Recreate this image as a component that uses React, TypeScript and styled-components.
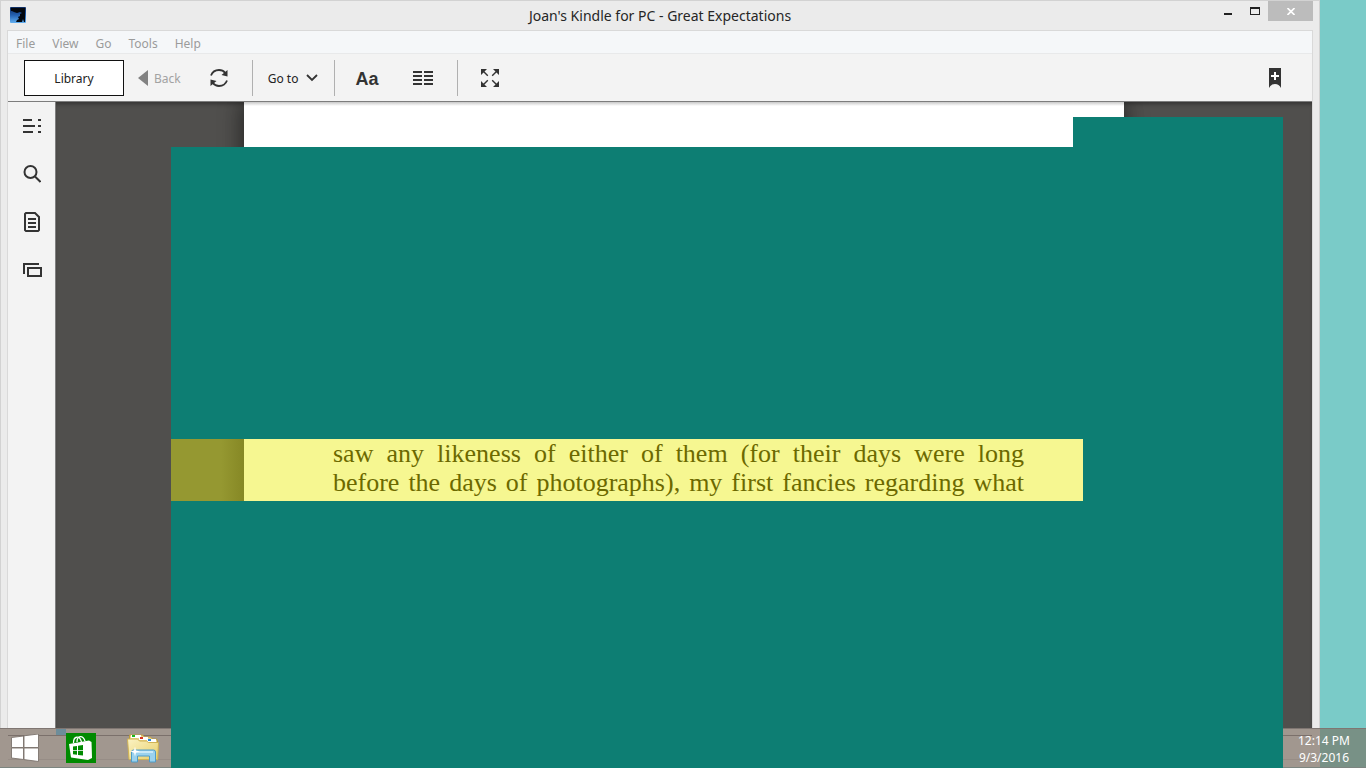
import React from 'react';
import styled, { createGlobalStyle } from 'styled-components';

const Global = createGlobalStyle`
  *, *::before, *::after { box-sizing: border-box; }
  html, body { margin: 0; }
  body { font-family: "Noto Sans", "Open Sans", sans-serif; font-size: 12px; overflow: hidden; }
  button { font: inherit; color: inherit; background: none; border: 0; padding: 0; margin: 0; }
  svg { display: block; }
`;

const Desktop = styled.div`
  position: relative;
  display: flex;
  height: 100vh;
  background: #7acbc8;
  overflow: hidden;
`;

const AppWindow = styled.section`
  display: flex;
  flex-direction: column;
  flex: 1;
  margin-right: 46px;
  padding: 0 6px 8px;
  background: #ebebeb;
  border: 1px solid #d2d2d2;
`;

const TitleBar = styled.header`
  position: relative;
  display: flex;
  justify-content: space-between;
  height: 29px;
  padding-left: 3px;
`;

const AppIcon = styled.svg`
  margin-top: 6px;
`;

const Title = styled.h1`
  position: absolute;
  inset: 0;
  margin: 0;
  text-align: center;
  font-size: 14px;
  font-weight: 400;
  line-height: 29px;
  color: #262626;
`;

const WindowControls = styled.div`
  position: relative;
  display: flex;
  height: 20px;
`;

const WindowButton = styled.button<{ $close?: boolean }>`
  display: grid;
  place-items: center;
  width: ${(p) => (p.$close ? 45 : 27)}px;
  background: ${(p) => (p.$close ? '#bcbcbc' : 'transparent')};
`;

const Frame = styled.div`
  display: flex;
  flex-direction: column;
  flex: 1;
  border: 1px solid #d9d9d9;
  border-bottom: 0;
`;

const MenuBar = styled.nav`
  display: flex;
  gap: 17px;
  height: 23px;
  padding-left: 8px;
  background: #f5f7f9;
  border-bottom: 1px solid #e8e9ea;
`;

const MenuItem = styled.button`
  color: #9b9b9b;
  padding-top: 2px;
  line-height: 22px;
`;

const Toolbar = styled.div`
  display: flex;
  align-items: center;
  height: 48px;
  padding: 0 31px 0 16px;
  background: #f3f3f3;
  border-bottom: 1px solid #7d7d7d;
`;

const LibraryButton = styled.button`
  width: 100px;
  height: 36px;
  padding-top: 2px;
  background: #fff;
  border: 1px solid #111;
  color: #222;
`;

const BackButton = styled.button`
  display: flex;
  align-items: center;
  gap: 6px;
  margin: 0 28px 0 14px;
  color: #a2a2a2;
`;

const Label = styled.span`
  padding-top: 2px;
`;

const ToolButton = styled.button<{ $gap?: number }>`
  display: flex;
  align-items: center;
  gap: 8px;
  margin-right: ${(p) => p.$gap ?? 0}px;
  color: #222;
`;

const TypeButton = styled(ToolButton)`
  padding-top: 2px;
  font-family: "Liberation Sans", sans-serif;
  font-size: 18px;
  font-weight: 700;
  line-height: 20px;
  color: #333;
`;

const Divider = styled.span<{ $gap: number }>`
  width: 1px;
  height: 36px;
  margin-right: ${(p) => p.$gap}px;
  background: #b0b0b0;
`;

const Spacer = styled.span`
  flex: 1;
`;

const Body = styled.div`
  display: flex;
  flex: 1;
`;

const SideBar = styled.aside`
  display: flex;
  flex-direction: column;
  align-items: center;
  gap: 24px;
  width: 48px;
  padding-top: 12px;
  background: #f3f3f3;
  border-right: 1px solid #7f7f7f;
`;

const SideButton = styled.button`
  display: grid;
  place-items: center;
  width: 24px;
  height: 24px;
`;

const Reader = styled.main`
  display: flex;
  flex: 1;
  padding: 0 188px;
  background: #504f4d;
  box-shadow: inset 0 4px 4px -2px rgba(0, 0, 0, 0.35);
  border-bottom: 1px solid #3c3a39;
  margin-bottom: 24px;
`;

const Page = styled.div`
  flex: 1;
  background: linear-gradient(#c8c8c8, #fff 4px);
  box-shadow: -4px 0 20px rgba(0, 0, 0, 0.35), 4px 0 20px rgba(0, 0, 0, 0.3);
  clip-path: inset(0 -30px 0 -30px);
`;

const MaskTab = styled.div`
  position: absolute;
  top: 117px;
  right: 83px;
  width: 210px;
  height: 30px;
  background: #0d7e73;
`;

const Mask = styled.div`
  position: absolute;
  inset: 147px 83px 0 171px;
  padding: 292px 200px 0 0;
  background: #0d7e73;
`;

const ReadingStrip = styled.div`
  height: 62px;
  padding: 0 59px 0 162px;
  background: linear-gradient(90deg, #959831 50px, #868825 73px, #f6f791 73px);
`;

const Passage = styled.p`
  margin: 0;
  font-family: "Liberation Serif", serif;
  font-size: 26px;
  line-height: 29px;
  color: #6c6900;
`;

const Line = styled.span`
  display: block;
  text-align: justify;
  text-align-last: justify;
  white-space: nowrap;
`;

const TaskBar = styled.footer<{ $end?: boolean }>`
  position: absolute;
  bottom: 0;
  ${(p) => (p.$end ? 'right: 0; width: 83px;' : 'left: 0; width: 171px;')}
  display: flex;
  align-items: center;
  height: 40px;
  background: ${(p) =>
    p.$end ? 'linear-gradient(90deg, #a1978f 37px, #789186 37px)' : '#a1978f'};
  border-top: 1px solid #7f7672;
  border-bottom: 1px solid #7c8580;
`;

const SeamLine = styled.span<{ $from: number; $to: number }>`
  position: absolute;
  top: 6px;
  left: ${(p) => p.$from}px;
  right: ${(p) => p.$to}px;
  height: 25px;
  border-top: 1px solid #7b706b;
  border-bottom: 1px solid #978d86;
`;

const ProgressGlint = styled.span`
  position: absolute;
  top: 0;
  left: 56px;
  width: 10px;
  height: 6px;
  background: #6d8d9a;
`;

const TaskButton = styled.button<{ $gap: number }>`
  position: relative;
  margin-left: ${(p) => p.$gap}px;
`;

const Clock = styled.time`
  position: relative;
  padding: 2px 0 0 15px;
  color: #fff;
  text-align: center;
  line-height: 17px;
  white-space: nowrap;
`;

const ink = '#333';

export default function App() {
  return (
    <>
      <Global />
      <Desktop>
        <AppWindow>
          <TitleBar>
            <AppIcon width="16" height="16" viewBox="0 0 16 16" aria-hidden="true">
              <defs>
                <linearGradient id="sky" x1="0" y1="1" x2="0" y2="0">
                  <stop offset="0" stopColor="#62b0f2" />
                  <stop offset=".5" stopColor="#2460b0" />
                  <stop offset="1" stopColor="#0d2c60" />
                </linearGradient>
              </defs>
              <rect width="16" height="16" rx="1" fill="url(#sky)" />
              <path d="M1 1h14v14h-1l-1-3-1 3H6l1-2 2-1-1-2 2-1V7l2-1-2-1-3 1-3-1-2-1H1z" fill="#03070e" />
            </AppIcon>
            <Title>Joan's Kindle for PC - Great Expectations</Title>
            <WindowControls>
              <WindowButton aria-label="Minimize">
                <svg width="12" height="12" viewBox="0 0 12 12"><path d="M2 8h8v2H2z" fill="#222" /></svg>
              </WindowButton>
              <WindowButton aria-label="Maximize">
                <svg width="10" height="8" viewBox="0 0 10 8"><path d="M0 0h10v8H0zM1 2v5h8V2z" fillRule="evenodd" fill="#222" /></svg>
              </WindowButton>
              <WindowButton $close aria-label="Close">
                <svg width="8" height="7" viewBox="0 0 8 7"><path d="M.5 0 7.5 7M7.5 0 .5 7" stroke="#fff" strokeWidth="1.6" /></svg>
              </WindowButton>
            </WindowControls>
          </TitleBar>
          <Frame>
            <MenuBar>
              {['File', 'View', 'Go', 'Tools', 'Help'].map((name) => (
                <MenuItem key={name}>{name}</MenuItem>
              ))}
            </MenuBar>
            <Toolbar>
              <LibraryButton>Library</LibraryButton>
              <BackButton>
                <svg width="10" height="16" viewBox="0 0 10 16"><path d="M0 8 10 0v16z" fill="#828282" /></svg>
                <Label>Back</Label>
              </BackButton>
              <ToolButton $gap={23} aria-label="Sync">
                <svg width="20" height="20" viewBox="0 0 20 20" fill="none" stroke={ink} strokeWidth="1.8">
                  <path d="M2 7.500C3.300 4 6.300 2 10 2c2.600 0 4.700 1 6.200 2.800M18 12.500c-1.300 3.500-4.300 5.500-8 5.500-2.600 0-4.700-1-6.200-2.800" />
                  <path d="M18.500 2v6.500L12.500 7zM1.500 18v-6.500L7.500 13z" fill={ink} stroke="none" />
                </svg>
              </ToolButton>
              <Divider $gap={15} />
              <ToolButton $gap={16}>
                <Label>Go to</Label>
                <svg width="12" height="8" viewBox="0 0 12 8"><path d="M1 1l5 5 5-5" fill="none" stroke={ink} strokeWidth="1.8" /></svg>
              </ToolButton>
              <Divider $gap={20} />
              <TypeButton $gap={35} aria-label="Display options">Aa</TypeButton>
              <ToolButton $gap={24} aria-label="Columns">
                <svg width="20" height="14" viewBox="0 0 20 14"><path d="M0 0h9v2H0zm11 0h9v2h-9zM0 4h9v2H0zm11 0h9v2h-9zM0 8h9v2H0zm11 0h9v2h-9zM0 12h9v2H0zm11 0h9v2h-9z" fill={ink} /></svg>
              </ToolButton>
              <Divider $gap={23} />
              <ToolButton aria-label="Full screen">
                <svg width="18" height="18" viewBox="0 0 18 18">
                  <path d="M0 0h6L0 6zM18 0v6l-6-6zM0 18v-6l6 6zM18 18h-6l6-6z" fill={ink} />
                  <path d="M2 2l4.800 4.800M16 2l-4.800 4.800M2 16l4.800-4.800M16 16l-4.800-4.800" stroke={ink} strokeWidth="1.4" />
                </svg>
              </ToolButton>
              <Spacer />
              <ToolButton aria-label="Add bookmark">
                <svg width="12" height="20" viewBox="0 0 12 20">
                  <path d="M0 0h12v20q-2-4-6-4t-6 4z" fill={ink} />
                  <path d="M2 8h8M6 4v8" stroke="#fff" strokeWidth="2" />
                </svg>
              </ToolButton>
            </Toolbar>
            <Body>
              <SideBar>
                <SideButton aria-label="Table of contents">
                  <svg width="18" height="14" viewBox="0 0 18 14"><path d="M0 0h9v2H0zM0 6h12v2H0zM0 12h10v2H0zM15 0h3v2h-3zM15 6h3v2h-3zM15 12h3v2h-3z" fill={ink} /></svg>
                </SideButton>
                <SideButton aria-label="Search">
                  <svg width="18" height="18" viewBox="0 0 18 18" fill="none" stroke={ink} strokeWidth="2"><circle cx="7.500" cy="7" r="6" /><path d="M12 11.500l5.500 5.500" /></svg>
                </SideButton>
                <SideButton aria-label="Notebook">
                  <svg width="16" height="20" viewBox="0 0 16 20" fill="none" stroke={ink} strokeWidth="2"><path d="M2 1h9l4 4v13l-1 1H2l-1-1V2zM4 7h8M4 11h8M4 15h8" /></svg>
                </SideButton>
                <SideButton aria-label="Flashcards">
                  <svg width="20" height="16" viewBox="0 0 20 16" fill="none" stroke={ink} strokeWidth="2"><path d="M2 12V2h15M6 6h13v8H6z" /></svg>
                </SideButton>
              </SideBar>
              <Reader><Page /></Reader>
            </Body>
          </Frame>
        </AppWindow>

        <MaskTab />
        <Mask>
          <ReadingStrip>
            <Passage>
              <Line>saw any likeness of either of them (for their days were long</Line>
              <Line>before the days of photographs), my first fancies regarding what</Line>
            </Passage>
          </ReadingStrip>
        </Mask>

        <TaskBar>
          <SeamLine $from={8} $to={0} />
          <ProgressGlint />
          <TaskButton $gap={11} aria-label="Start">
            <svg width="28" height="28" viewBox="0 0 28 28"><path d="M.5 3.500 12.500 2v11.500H.5zM13 1.800 27.500 0v13.500H13zM.5 14h12v11.500L.5 24zM13 14h14.500v13.500L13 25.600z" fill="#fff" stroke="#7d746e" strokeWidth=".9" /></svg>
          </TaskButton>
          <TaskButton $gap={27} aria-label="Store">
            <svg width="30" height="30" viewBox="0 0 30 30">
              <path d="M0 0h30v30H0z" fill="#008a00" />
              <path d="M3 11 23 7.500 25.500 9 26 25l-4 2-17-2.500z" fill="#fff" />
              <path d="M7.500 10c0-7 6-8 8-1M11 9c0-7 6-7 8-1" fill="none" stroke="#fff" strokeWidth="1.300" />
              <path d="M7 13.500l4-.6v4H7zM12 12.700l5-.8v5h-5zM7 17.800h4v4l-4-.5zM12 17.800h5v4.800l-5-.7z" fill="#008a00" />
            </svg>
          </TaskButton>
          <TaskButton $gap={31} aria-label="File Explorer">
            <svg width="32" height="30" viewBox="0 0 32 30">
              <defs>
                <linearGradient id="folder" x1="0" y1="0" x2="1" y2="1">
                  <stop offset="0" stopColor="#fbf3c4" />
                  <stop offset="1" stopColor="#e8cf6a" />
                </linearGradient>
              </defs>
              <path d="M2.500 3V2h13l2 2h6l2 2h4l1 2v14h-28z" fill="#ead58a" stroke="#bd9b3d" />
              <path d="M4 2h10v3H4zM12 4h9v3h-9zM20 6h9v3h-9z" fill="#fff" />
              <path d="M5 2h3v2H5z" fill="#17b51b" /><path d="M13 4h3v2h-3z" fill="#d83420" /><path d="M21 6h3v2h-3z" fill="#2484d8" />
              <path d="M.5 6h10l2 2h7l2 1.500h10l-.8 17H2z" fill="url(#folder)" stroke="#d0b254" />
              <path d="M4.500 29V19q0-2 2-2h20q2 0 2 2v10h-6v-6h-12v6z" fill="#9ad2ee" stroke="#4f9cc8" />
              <path d="M6 19h20" stroke="#d8f1fb" strokeWidth="1.500" />
              <path d="M8 13.500l1 4 4 1-4 1-1 4-1-4-4-1 4-1z" fill="#fff" />
            </svg>
          </TaskButton>
        </TaskBar>
        <TaskBar $end>
          <SeamLine $from={0} $to={54} />
          <Clock>12:14 PM<br />9/3/2016</Clock>
        </TaskBar>
      </Desktop>
    </>
  );
}
